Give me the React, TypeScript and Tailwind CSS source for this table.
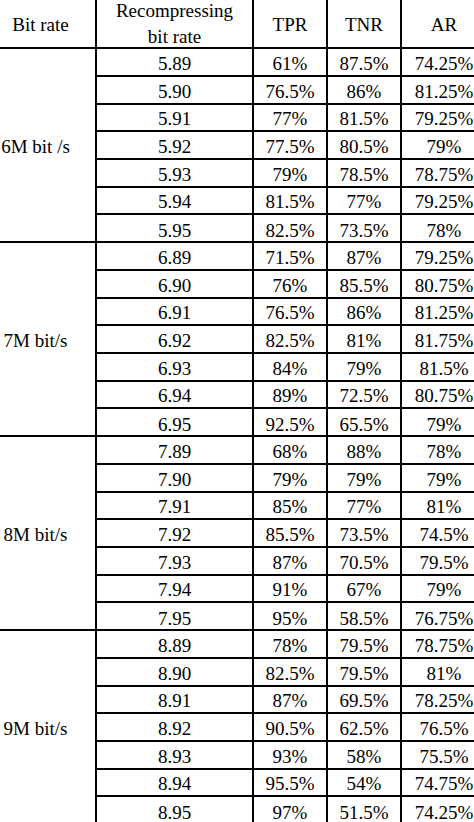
type Row = [string, string, string, string];

interface Group {
  label: string;
  rows: Row[];
}

const GROUPS: Group[] = [
  {
    label: '6M bit /s',
    rows: [
      ['5.89', '61%', '87.5%', '74.25%'],
      ['5.90', '76.5%', '86%', '81.25%'],
      ['5.91', '77%', '81.5%', '79.25%'],
      ['5.92', '77.5%', '80.5%', '79%'],
      ['5.93', '79%', '78.5%', '78.75%'],
      ['5.94', '81.5%', '77%', '79.25%'],
      ['5.95', '82.5%', '73.5%', '78%'],
    ],
  },
  {
    label: '7M bit/s',
    rows: [
      ['6.89', '71.5%', '87%', '79.25%'],
      ['6.90', '76%', '85.5%', '80.75%'],
      ['6.91', '76.5%', '86%', '81.25%'],
      ['6.92', '82.5%', '81%', '81.75%'],
      ['6.93', '84%', '79%', '81.5%'],
      ['6.94', '89%', '72.5%', '80.75%'],
      ['6.95', '92.5%', '65.5%', '79%'],
    ],
  },
  {
    label: '8M bit/s',
    rows: [
      ['7.89', '68%', '88%', '78%'],
      ['7.90', '79%', '79%', '79%'],
      ['7.91', '85%', '77%', '81%'],
      ['7.92', '85.5%', '73.5%', '74.5%'],
      ['7.93', '87%', '70.5%', '79.5%'],
      ['7.94', '91%', '67%', '79%'],
      ['7.95', '95%', '58.5%', '76.75%'],
    ],
  },
  {
    label: '9M bit/s',
    rows: [
      ['8.89', '78%', '79.5%', '78.75%'],
      ['8.90', '82.5%', '79.5%', '81%'],
      ['8.91', '87%', '69.5%', '78.25%'],
      ['8.92', '90.5%', '62.5%', '76.5%'],
      ['8.93', '93%', '58%', '75.5%'],
      ['8.94', '95.5%', '54%', '74.75%'],
      ['8.95', '97%', '51.5%', '74.25%'],
    ],
  },
];

// row pitch is ~27.7px, so mix 28 and 27
const ROW_H = ['h-[28px]', 'h-[28px]', 'h-[27px]', 'h-[28px]', 'h-[28px]', 'h-[27px]', 'h-[28px]'];

function Cell({ className, children }: { className: string; children: React.ReactNode }) {
  return (
    <div className={`flex items-center justify-center whitespace-nowrap pt-[3px] ${className}`}>
      {children}
    </div>
  );
}

export default function App() {
  return (
    <div
      className="w-[474px] h-[822px] overflow-hidden bg-white text-black text-[19px] leading-[26px]"
      style={{ fontFamily: '"Liberation Serif", "Times New Roman", serif' }}
    >
      <div className="-ml-[14px] w-[500px]">
        {/* Header */}
        <div className="flex h-[49px] border-b-2 border-black">
          <Cell className="w-[109px] pt-[1px]">Bit rate</Cell>
          <div className="w-[157px] border-l-2 border-black flex flex-col items-center justify-center text-center">
            <span>Recompressing</span>
            <span>bit rate</span>
          </div>
          <Cell className="w-[74px] border-l-2 border-black pt-[1px]">TPR</Cell>
          <Cell className="w-[74px] border-l-2 border-black pt-[1px]">TNR</Cell>
          <Cell className="w-[86px] border-l-2 border-black pt-[1px]">AR</Cell>
        </div>

        {GROUPS.map((group) => (
          <div key={group.label} className="flex h-[194px] border-b-2 border-black">
            <Cell className="w-[109px] pr-[10px]">{group.label}</Cell>
            <div className="flex flex-col border-l-2 border-black">
              {group.rows.map((row, idx) => (
                <div
                  key={row[0]}
                  className={`flex ${ROW_H[idx]} ${idx < group.rows.length - 1 ? 'border-b-2 border-black' : ''}`}
                >
                  <Cell className="w-[155px]">{row[0]}</Cell>
                  <Cell className="w-[74px] border-l-2 border-black">{row[1]}</Cell>
                  <Cell className="w-[74px] border-l-2 border-black">{row[2]}</Cell>
                  <Cell className="w-[86px] border-l-2 border-black">{row[3]}</Cell>
                </div>
              ))}
            </div>
          </div>
        ))}
      </div>
    </div>
  );
}
